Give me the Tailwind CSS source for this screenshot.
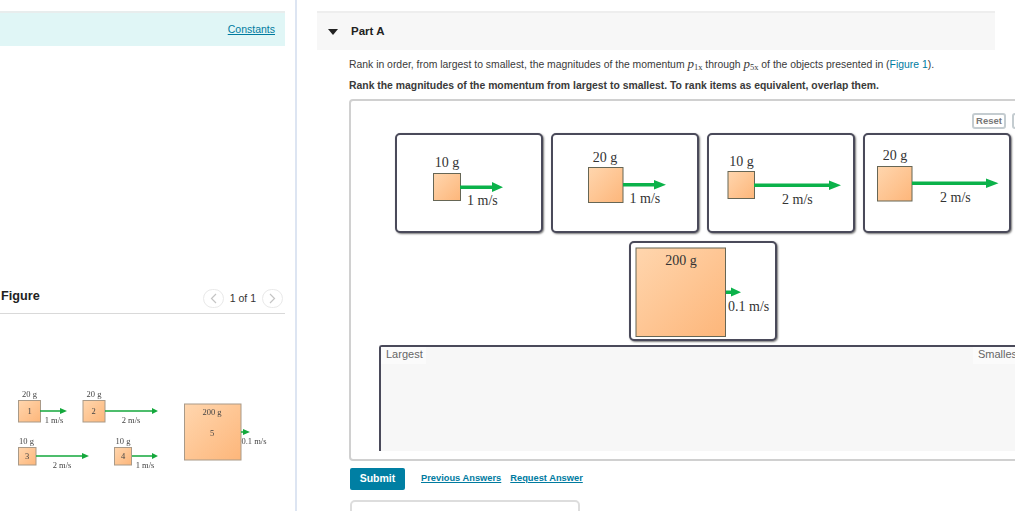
<!DOCTYPE html>
<html>
<head>
<meta charset="utf-8">
<script src="https://cdn.jsdelivr.net/npm/@tailwindcss/browser@4"></script>
</head>
<body class="bg-white">
<svg class="absolute w-0 h-0"><defs>
<linearGradient id="o" x1="0" y1="0" x2="1" y2="1"><stop offset="0" stop-color="#ffd6ae"/><stop offset="1" stop-color="#fdb67a"/></linearGradient>
</defs></svg>
<div class="flex w-[1015px] h-[511px] overflow-hidden font-['Liberation_Sans',Arial,sans-serif] text-[#333]">
  <!-- left pane -->
  <div class="w-[285px] shrink-0 flex flex-col pt-[11px]">
    <div class="h-[35px] bg-[#e0f6f6] border-t-2 border-[#e8eded] flex items-start justify-end pr-[10px] pt-[8px]">
      <a class="text-[10.5px] leading-[16px] text-[#007b9f] underline">Constants</a>
    </div>
    <div class="mt-[239px] h-[29px] border-b border-[#d9d9d9] flex items-start justify-between pl-px pr-[2px] pb-[9px]">
      <span class="text-[12.7px] font-bold leading-[20px] mt-px text-[#222]">Figure</span>
      <div class="flex items-center gap-[7px] text-[10.5px] mt-[4px]">
        <span class="w-[21px] h-[19px] rounded-full border border-[#e9e9e9] flex items-center justify-center"><svg width="7" height="11" viewBox="0 0 7 11" fill="none" stroke="#c4c4c4" stroke-width="1.2"><path d="M6 1 1.5 5.5 6 10"/></svg></span>
        <span class="-mx-px">1 of 1</span>
        <span class="w-[21px] h-[19px] rounded-full border border-[#e9e9e9] flex items-center justify-center"><svg width="7" height="11" viewBox="0 0 7 11" fill="none" stroke="#c4c4c4" stroke-width="1.2"><path d="M1 1 5.5 5.5 1 10"/></svg></span>
      </div>
    </div>
    <svg class="mt-[72px] block blur-[0.35px]" width="285" height="90" viewBox="0 386 285 90" font-family="Liberation Serif, serif" font-size="8.5" fill="#444" text-anchor="middle">
      <g stroke="#a99a88" stroke-width="1" fill="url(#o)">
        <rect x="18.5" y="400.5" width="22" height="21.500"/><rect x="83" y="400.5" width="22" height="21.500"/>
        <rect x="18.500" y="447.500" width="17.500" height="17.500"/><rect x="114.500" y="447.500" width="17" height="17.500"/>
        <rect x="184.500" y="404" width="56.500" height="56"/>
      </g>
      <g stroke="#14a83c" stroke-width="1.500">
        <path d="M40 411H60M105 411H152M36 456H82M132 456H152M241 432H244"/>
      </g>
      <g fill="#14a83c" stroke="none">
        <path d="M60 408 67 411 60 414zM152 408 158 411 152 414zM82 453 89 456 82 459zM152 453 158 456 152 459zM243 429 250 432 243 435z"/>
      </g>
      <text x="29.500" y="397">20 g</text><text x="94" y="397">20 g</text><text x="26.500" y="444">10 g</text><text x="123" y="444">10 g</text>
      <text x="212" y="415">200 g</text>
      <text x="29.500" y="414">1</text><text x="93.500" y="414">2</text><text x="27" y="459">3</text><text x="123" y="459">4</text><text x="212" y="436">5</text>
      <text x="54" y="423">1 m/s</text><text x="131" y="423">2 m/s</text><text x="62" y="468">2 m/s</text><text x="145" y="468">1 m/s</text><text x="254" y="444">0.1 m/s</text>
    </svg>
  </div>
  <!-- divider -->
  <div class="w-[2px] ml-[10px] shrink-0 bg-[#dde5f2]"></div>
  <!-- right pane -->
  <div class="ml-[20px] w-[678px] shrink-0 pt-[11px]">
    <div class="h-[39px] bg-[#f7f7f7] border-t-2 border-[#eeeeee] flex items-center">
      <svg class="ml-[11px]" width="10" height="6" viewBox="0 0 10 6"><path d="M0 0H10L5 6z" fill="#222"/></svg>
      <span class="ml-[13px] text-[11.5px] font-semibold text-[#222]">Part A</span>
    </div>
    <p class="ml-[32px] mt-[7px] text-[10.4px] leading-[14px] whitespace-nowrap text-[#3a3a3a]">Rank in order, from largest to smallest, the magnitudes of the momentum <span class="font-['Liberation_Serif',serif] text-[13px]"><i>p</i><sub class="text-[8.5px]">1x</sub></span> through <span class="font-['Liberation_Serif',serif] text-[13px]"><i>p</i><sub class="text-[8.5px]">5x</sub></span> of the objects presented in (<a class="text-[#007b9f]">Figure 1</a>).</p>
    <p class="ml-[32px] mt-[7px] text-[10.4px] leading-[14px] font-bold whitespace-nowrap text-[#3a3a3a]">Rank the magnitudes of the momentum from largest to smallest. To rank items as equivalent, overlap them.</p>
    <!-- ranking box -->
    <div class="ml-[32px] mt-[6px] w-[712px] h-[362px] border-2 border-[#d0d0d0] rounded-[4px] flex flex-col">
      <div class="flex justify-end gap-[6px] pr-[14px] pt-[12px] h-[32px]">
        <span class="w-[34px] h-[16px] border-2 border-[#c4ccd0] rounded-[3px] text-[9.5px] font-bold text-[#777] flex items-center justify-center">Reset</span>
        <span class="w-[33px] h-[16px] border-2 border-[#c4ccd0] rounded-[3px]"></span>
      </div>
      <div class="flex justify-center flex-wrap gap-x-[8px] gap-y-[8px] font-['Liberation_Serif',serif] w-[708px] pr-[4px]">
        <div class="w-[148px] h-[100px] border-2 border-[#4a4a5a] rounded-[5px] bg-white shadow-[1px_1px_2px_#777]">
          <svg class="block w-full h-full" viewBox="397 135 144 96" font-size="14" fill="#333" stroke="none">
            <rect x="433.500" y="173.500" width="27" height="27" fill="url(#o)" stroke="#665" stroke-width="1"/>
            <path d="M460 185.500H492V182L503 187.300 492 192V189H460z" fill="#0bb24a"/>
            <text x="447" y="167" text-anchor="middle">10 g</text><text x="467" y="205">1 m/s</text>
          </svg>
        </div>
        <div class="w-[148px] h-[100px] border-2 border-[#4a4a5a] rounded-[5px] bg-white shadow-[1px_1px_2px_#777]">
          <svg class="block w-full h-full" viewBox="553 135 144 96" font-size="14" fill="#333" stroke="none">
            <rect x="588.500" y="167.500" width="34.500" height="35" fill="url(#o)" stroke="#665" stroke-width="1"/>
            <path d="M623 183H654V180L666 184.700 654 189.500V186.500H623z" fill="#0bb24a"/>
            <text x="605" y="162" text-anchor="middle">20 g</text><text x="629.500" y="203">1 m/s</text>
          </svg>
        </div>
        <div class="w-[148px] h-[100px] border-2 border-[#4a4a5a] rounded-[5px] bg-white shadow-[1px_1px_2px_#777]">
          <svg class="block w-full h-full" viewBox="709 135 144 96" font-size="14" fill="#333" stroke="none">
            <rect x="728" y="171.500" width="26.500" height="27" fill="url(#o)" stroke="#665" stroke-width="1"/>
            <path d="M754 183.500H829V180.500L841 185.300 829 190V187H754z" fill="#0bb24a"/>
            <text x="741.500" y="166" text-anchor="middle">10 g</text><text x="782" y="203.500">2 m/s</text>
          </svg>
        </div>
        <div class="w-[148px] h-[100px] border-2 border-[#4a4a5a] rounded-[5px] bg-white shadow-[1px_1px_2px_#777]">
          <svg class="block w-full h-full" viewBox="865 135 144 96" font-size="14" fill="#333" stroke="none">
            <rect x="877.500" y="166.500" width="34.500" height="34.500" fill="url(#o)" stroke="#665" stroke-width="1"/>
            <path d="M912 181.500H986V178.500L998.500 183.300 986 188V185H912z" fill="#0bb24a"/>
            <text x="895" y="160" text-anchor="middle">20 g</text><text x="940" y="202">2 m/s</text>
          </svg>
        </div>
        <div class="w-[148px] h-[100px] border-2 border-[#4a4a5a] rounded-[5px] bg-white shadow-[1px_1px_2px_#777]">
          <svg class="block w-full h-full" viewBox="632 243 144 96" font-size="14" fill="#333" stroke="none">
            <rect x="637" y="248" width="89.500" height="88.500" fill="url(#o)" stroke="#665" stroke-width="1"/>
            <path d="M727 290.500H732V287.500L742 292.300 732 296.500V294H727z" fill="#0bb24a"/>
            <text x="682" y="264.500" text-anchor="middle">200 g</text><text x="729" y="311">0.1 m/s</text>
          </svg>
        </div>
      </div>
      <div class="mt-[4px] ml-[28px] w-[648px] h-[106px] bg-[#f7f7f7] border-t-2 border-l-2 border-[#4a4a5a] rounded-tl-[3px] flex justify-between text-[11px] text-[#666]">
        <span class="h-[17px] w-[45px] bg-[#fbfbfb] pl-[5px] leading-[15px]">Largest</span>
        <span class="h-[17px] w-[54px] bg-[#fbfbfb] pl-[5px] leading-[15px] whitespace-nowrap">Smallest</span>
      </div>
    </div>
    <div class="ml-[33px] mt-[7px] flex items-center">
      <span class="w-[55px] h-[22px] bg-[#007fa3] rounded-[2px] text-white text-[10.5px] font-bold flex items-center justify-center">Submit</span>
      <a class="ml-[16px] text-[9.3px] font-bold text-[#007b9f] underline">Previous Answers</a>
      <a class="ml-[9px] text-[9.3px] font-bold text-[#007b9f] underline">Request Answer</a>
    </div>
    <div class="ml-[33px] mt-[10px] w-[230px] h-[20px] border-2 border-[#dddddd] rounded-[5px]"></div>
  </div>
</div>
</body>
</html>
